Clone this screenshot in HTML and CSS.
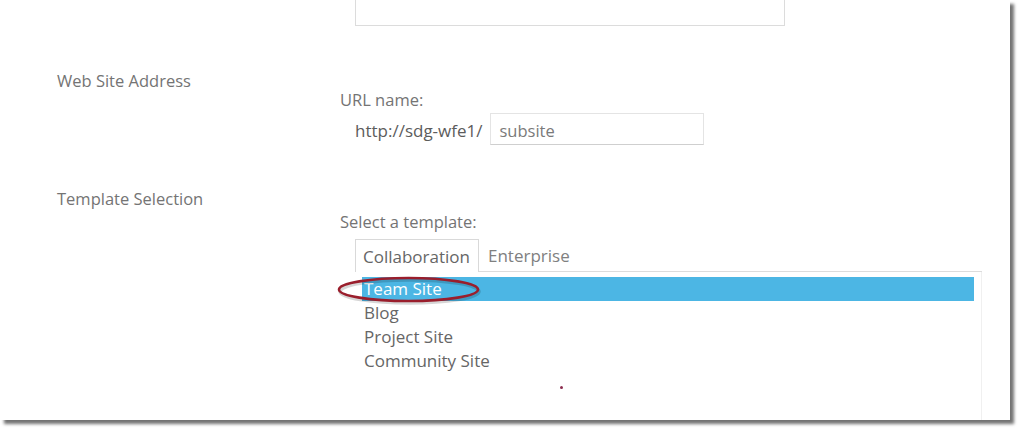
FILE: index.html
```html
<!DOCTYPE html>
<html>
<head>
<meta charset="utf-8">
<link rel="stylesheet" href="styles.css">
</head>
<body>
<div class="frame">
  <div class="top-row">
    <div class="top-box"></div>
  </div>

  <div class="section section-address">
    <div class="label">Web Site Address</div>
    <div class="field">
      <div class="field-caption">URL name:</div>
      <div class="url-row">
        <span class="url-prefix">http://sdg-wfe1/</span>
        <div class="text-input">subsite</div>
      </div>
    </div>
  </div>

  <div class="section section-template">
    <div class="label">Template Selection</div>
    <div class="field">
      <div class="field-caption">Select a template:</div>
      <div class="tabs">
        <div class="tab tab-active">Collaboration</div>
        <div class="tab-rest"><div class="tab">Enterprise</div></div>
      </div>
      <div class="list">
        <div class="list-item selected">Team Site</div>
        <div class="list-item">Blog</div>
        <div class="list-item">Project Site</div>
        <div class="list-item">Community Site</div>
        <svg class="ring" width="148" height="32" viewBox="0 0 148 32">
          <ellipse cx="72.5" cy="16.5" rx="69.5" ry="11.5" fill="none" stroke="#000" stroke-opacity="0.16" stroke-width="3.5"/>
          <ellipse cx="71.5" cy="14.5" rx="69.5" ry="11.5" fill="none" stroke="#9a1e2c" stroke-width="2.6"/>
        </svg>
        <span class="dot"></span>
      </div>
    </div>
  </div>
</div>
</body>
</html>
```

FILE: styles.css
```css
html, body {
  margin: 0;
  padding: 0;
  background: #ffffff;
}

body {
  font-family: "Open Sans", "Noto Sans", sans-serif;
  color: #666666;
  width: 1024px;
  height: 437px;
  overflow: hidden;
}

.frame {
  width: 1010px;
  height: 420px;
  background: #ffffff;
  box-shadow: 4px 4px 3px rgba(0, 0, 0, 0.55);
  overflow: hidden;
}

.top-row {
  padding-left: 355px;
}

.top-box {
  width: 428px;
  height: 25px;
  border: 1px solid #dcdcdc;
  border-top: none;
}

.section {
  display: grid;
  grid-template-columns: 340px 1fr;
}

.section-address {
  margin-top: 44px;
}

.section-template {
  margin-top: 43px;
}

.label {
  padding-left: 57px;
  font-size: 16.5px;
  line-height: 22px;
  color: #747474;
}

.field {
  padding-top: 19px;
}

.section-template .field {
  padding-top: 23px;
}

.field-caption {
  font-size: 16.5px;
  line-height: 22px;
  color: #747474;
}

.url-row {
  display: flex;
  align-items: baseline;
  gap: 8px;
  margin-top: 2px;
  padding-left: 15px;
}

.url-prefix {
  font-size: 17px;
  color: #5c5c5c;
}

.text-input {
  box-sizing: border-box;
  width: 214px;
  height: 32px;
  padding: 3px 8px 0;
  line-height: 27px;
  font-size: 16.5px;
  color: #7a7a7a;
  border: 1px solid #e4e4e4;
  border-bottom-color: #cfcfcf;
}

.tabs {
  display: flex;
  margin-left: 15px;
  margin-top: 6px;
  width: 627px;
}

.tab {
  font-size: 17px;
  line-height: 22px;
  padding: 6px 8px 4px 7px;
  color: #808080;
}

.tab-active {
  border: 1px solid #d9d9d9;
  border-bottom: none;
  color: #666666;
}

.tab-rest {
  flex: 1;
  display: flex;
  border-bottom: 1px solid #dcdcdc;
}

.tab-rest .tab {
  padding-left: 9px;
}

.list {
  position: relative;
  margin-left: 15px;
  width: 627px;
  box-sizing: border-box;
  height: 160px;
  border-right: 1px solid #f0f0f0;
  padding: 5px 7px 0 7px;
}

.list-item {
  font-size: 17px;
  line-height: 24px;
  padding-left: 2px;
  color: #666666;
}

.list-item.selected {
  background: #4cb6e4;
  color: #ffffff;
}

.ring {
  position: absolute;
  left: -18px;
  top: 3px;
}

.dot {
  position: absolute;
  left: 205px;
  top: 114px;
  width: 3px;
  height: 3px;
  border-radius: 50%;
  background: #8c2d4f;
}
```
